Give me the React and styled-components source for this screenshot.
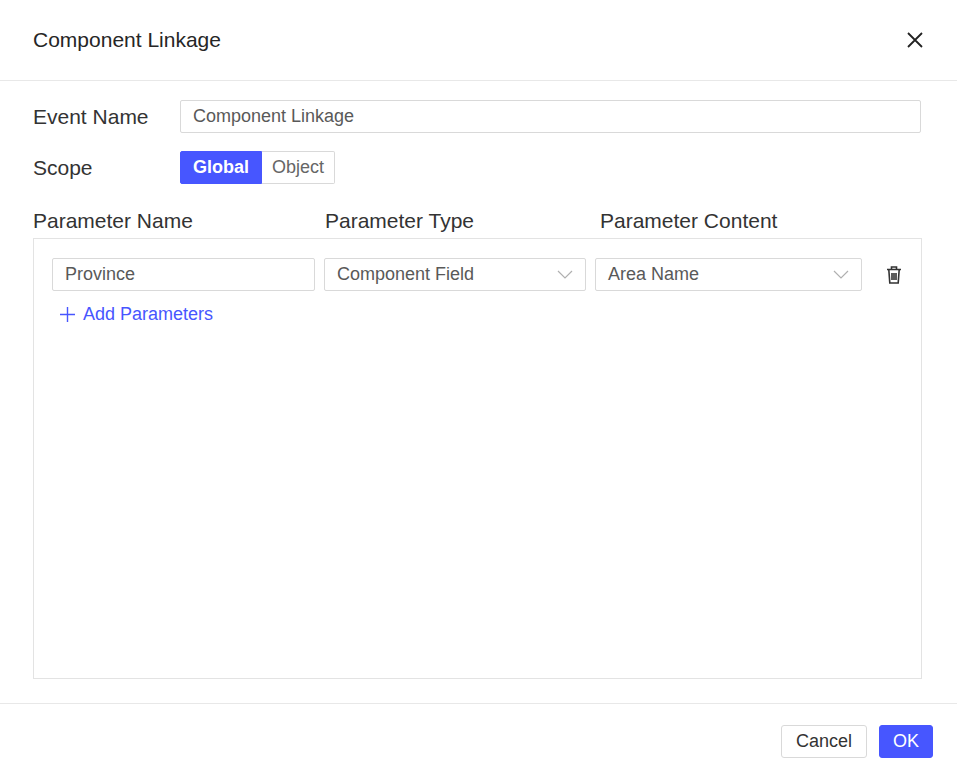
import React from "react";
import styled, { createGlobalStyle } from "styled-components";

const G = createGlobalStyle`
  body { margin: 0; font-family: "Liberation Sans", Arial, sans-serif; background: #fff; }
`;
const Dialog = styled.div`width: 957px; height: 780px; display: flex; flex-direction: column; color: #333;`;
const Header = styled.div`height: 81px; box-sizing: border-box; border-bottom: 1px solid #e8e8e8; display: flex; align-items: center; justify-content: space-between; padding: 0 33px; font-size: 21px; color: #262626;`;
const Close = styled.svg`width: 18px; height: 18px;`;
const Body = styled.div`flex: 1; padding: 19px 36px 24px 33px; display: flex; flex-direction: column;`;
const Row = styled.div`display: flex; align-items: center; height: 33px; margin-bottom: ${p => p.mb || 0}px;`;
const Label = styled.div`width: 147px; font-size: 21px; color: #333;`;
const Input = styled.div`flex: ${p => p.flex ? 1 : "none"}; width: ${p => p.w ? p.w + "px" : "auto"}; box-sizing: border-box; height: ${p => p.h || 33}px; border: 1px solid #d9d9d9; border-radius: 2px; padding: 0 12px; display: flex; align-items: center; justify-content: space-between; font-size: 18px; color: #595959;`;
const Seg = styled.div`display: flex;`;
const SegBtn = styled.div`height: 33px; box-sizing: border-box; padding: 0 ${p => p.px}px; display: flex; align-items: center; font-size: 18px; border: 1px solid ${p => p.active ? "#4756ff" : "#d9d9d9"}; background: ${p => p.active ? "#4756ff" : "#fff"}; color: ${p => p.active ? "#fff" : "#666"}; font-weight: ${p => p.active ? "bold" : "normal"}; border-radius: ${p => p.active ? "2px 0 0 2px" : "0 2px 2px 0"}; border-left-width: ${p => p.active ? 1 : 0}px;`;
const Heads = styled.div`display: flex; font-size: 21px; margin-top: 20px; height: 34px; align-items: center;`;
const Head = styled.div`width: ${p => p.w}px;`;
const Box = styled.div`flex: 1; margin-right: -1px; border: 1px solid #e3e3e3; padding: 19px 18px; display: flex; flex-direction: column;`;
const ParamRow = styled.div`display: flex; gap: 9px; align-items: center;`;
const Add = styled.div`display: flex; align-items: center; gap: 8px; color: #4756ff; font-size: 18px; margin: 13px 0 0 8px;`;
const Footer = styled.div`height: 74px; border-top: 1px solid #e8e8e8; display: flex; justify-content: flex-end; align-items: center; gap: 12px; padding: 0 24px 2px 0;`;
const Btn = styled.div`height: 33px; box-sizing: border-box; padding: 0 ${p => p.px}px; display: flex; align-items: center; font-size: 18px; border-radius: 3px; border: 1px solid ${p => p.primary ? "#4756ff" : "#d9d9d9"}; background: ${p => p.primary ? "#4756ff" : "#fff"}; color: ${p => p.primary ? "#fff" : "#333"};`;

const Chevron = () => (
  <svg width="16" height="10" viewBox="0 0 16 10"><path d="M1 1l7 7 7-7" fill="none" stroke="#b0b0b0" strokeWidth="1.2" /></svg>
);
const Trash = () => (
  <svg width="18" height="20" viewBox="0 0 18 20" style={{ marginLeft: 14 }}>
    <path d="M2 4.5h14M6.5 4.5V2h5v2.5M3.8 4.5l1 13.5h8.4l1-13.5M7 8v7M9 8v7M11 8v7" fill="none" stroke="#333" strokeWidth="1.6" />
  </svg>
);

export default function App() {
  return (
    <Dialog>
      <G />
      <Header>
        Component Linkage
        <Close viewBox="0 0 18 18"><path d="M2 2l14 14M16 2L2 16" stroke="#222" strokeWidth="1.8" /></Close>
      </Header>
      <Body>
        <Row mb={18}>
          <Label>Event Name</Label>
          <Input flex>Component Linkage</Input>
        </Row>
        <Row>
          <Label>Scope</Label>
          <Seg>
            <SegBtn active px={12}>Global</SegBtn>
            <SegBtn px={10}>Object</SegBtn>
          </Seg>
        </Row>
        <Heads>
          <Head w={292}>Parameter Name</Head>
          <Head w={275}>Parameter Type</Head>
          <Head>Parameter Content</Head>
        </Heads>
        <Box>
          <ParamRow>
            <Input w={263}>Province</Input>
            <Input w={262}>Component Field<Chevron /></Input>
            <Input w={267}>Area Name<Chevron /></Input>
            <Trash />
          </ParamRow>
          <Add>
            <svg width="15" height="15" viewBox="0 0 15 15"><path d="M7.5 0v15M0 7.5h15" stroke="#4756ff" strokeWidth="1.4" /></svg>
            Add Parameters
          </Add>
        </Box>
      </Body>
      <Footer>
        <Btn px={14}>Cancel</Btn>
        <Btn primary px={13}>OK</Btn>
      </Footer>
    </Dialog>
  );
}
